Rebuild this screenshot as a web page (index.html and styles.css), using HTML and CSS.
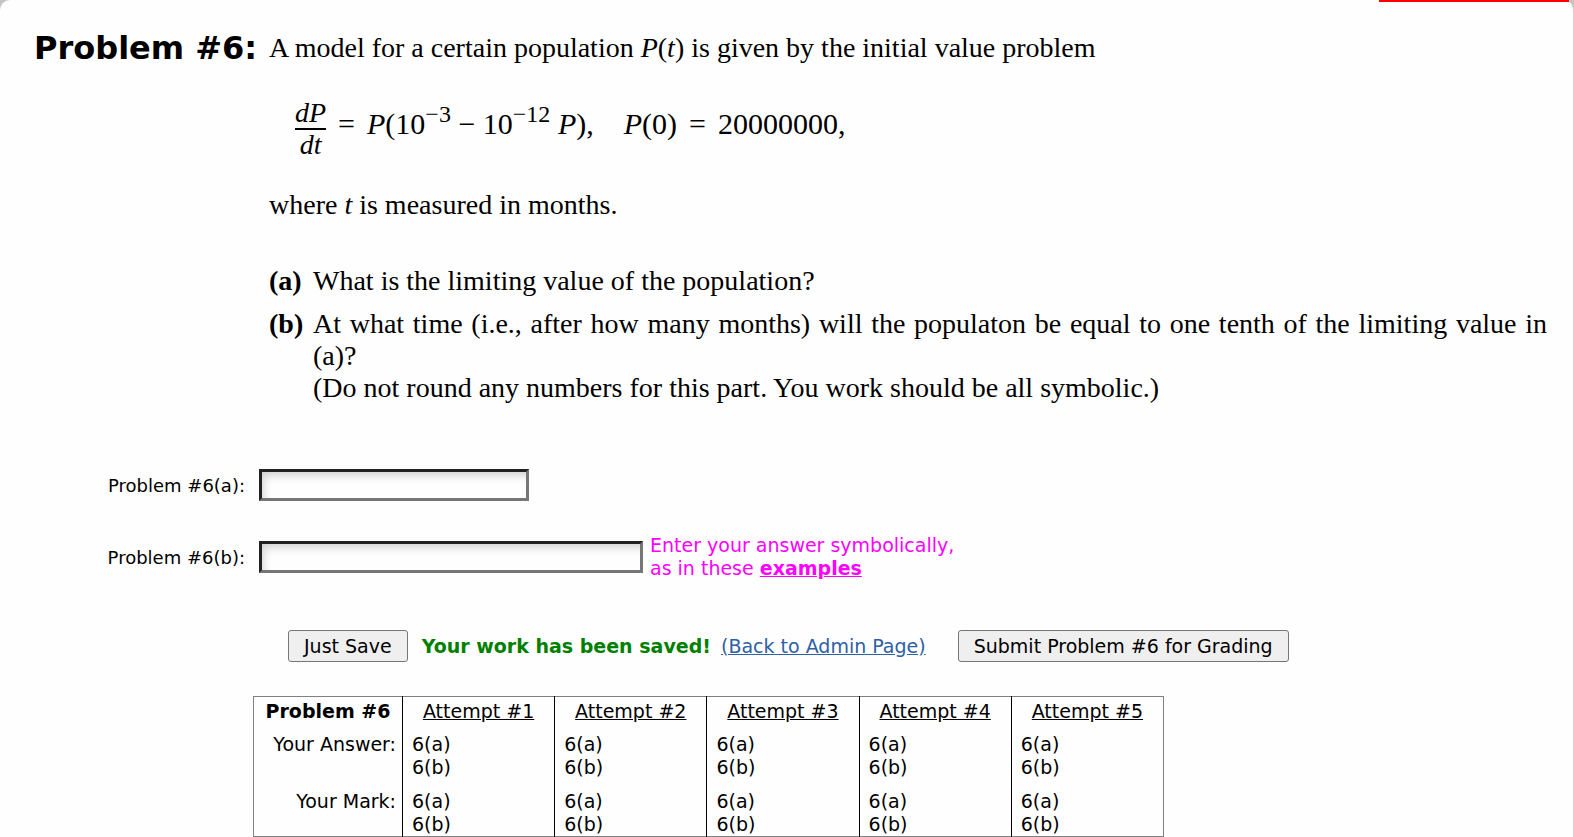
FILE: index.html
```html
<!DOCTYPE html>
<html lang="en">
<head>
    <meta charset="UTF-8">
    <meta name="viewport" content="width=device-width, initial-scale=1.0">
    <title>Problem #6</title>
    <link rel="stylesheet" href="styles.css">
</head>
<body>
    <main class="page">
        <div class="marker"></div>

        <!-- Problem statement -->
        <section class="problem">
            <h1 class="problem-title">Problem #6:</h1>
            <div class="problem-body">
                <p class="intro">A model for a certain population <i>P</i>(<i>t</i>) is given by the initial value problem</p>

                <div class="equation">
                    <span class="fraction"><i class="numerator">dP</i><i>dt</i></span>
                    <span class="term">=</span>
                    <span class="term"><i>P</i>(10<sup>−3</sup> − 10<sup>−12</sup> <i>P</i>),</span>
                    <span class="term condition"><i>P</i>(0)</span>
                    <span class="term">=</span>
                    <span class="term">20000000,</span>
                </div>

                <p class="where">where <i>t</i> is measured in months.</p>

                <div class="part">
                    <b>(a)</b>
                    <p>What is the limiting value of the population?</p>
                </div>
                <div class="part">
                    <b>(b)</b>
                    <p>At what time (i.e., after how many months) will the populaton be equal to one tenth of the limiting value in (a)?<br>(Do not round any numbers for this part. You work should be all symbolic.)</p>
                </div>
            </div>
        </section>

        <!-- Answer form -->
        <form class="answers" id="answerForm">
            <div class="answer-row">
                <label for="answerA">Problem #6(a):</label>
                <input type="text" id="answerA" name="answerA" class="answer-a">
            </div>
            <div class="answer-row">
                <label for="answerB">Problem #6(b):</label>
                <input type="text" id="answerB" name="answerB" class="answer-b">
                <p class="hint">Enter your answer symbolically,<br>as in these <a href="#examples">examples</a></p>
            </div>
            <div class="actions">
                <button type="button">Just Save</button>
                <p class="saved"><b>Your work has been saved!</b> <a href="#admin">(Back to Admin Page)</a></p>
                <button type="submit">Submit Problem #6 for Grading</button>
            </div>
        </form>

        <!-- Attempts -->
        <table class="attempts">
            <thead>
                <tr>
                    <th class="first">Problem #6</th>
                    <th>Attempt #1</th>
                    <th>Attempt #2</th>
                    <th>Attempt #3</th>
                    <th>Attempt #4</th>
                    <th>Attempt #5</th>
                </tr>
            </thead>
            <tbody>
                <tr>
                    <td class="row-label">Your Answer:</td>
                    <td>6(a)<br>6(b)</td>
                    <td>6(a)<br>6(b)</td>
                    <td>6(a)<br>6(b)</td>
                    <td>6(a)<br>6(b)</td>
                    <td>6(a)<br>6(b)</td>
                </tr>
                <tr>
                    <td class="row-label">Your Mark:</td>
                    <td>6(a)<br>6(b)</td>
                    <td>6(a)<br>6(b)</td>
                    <td>6(a)<br>6(b)</td>
                    <td>6(a)<br>6(b)</td>
                    <td>6(a)<br>6(b)</td>
                </tr>
            </tbody>
        </table>
    </main>
</body>
</html>
```
FILE: styles.css
```css
* {
    box-sizing: border-box;
}

body {
    margin: 0;
    background: #c4c4c4;
    color: #000;
    font-family: Verdana, "DejaVu Sans", sans-serif;
    font-size: 19px;
    line-height: 23px;
}

p, h1 {
    margin: 0;
}

.page {
    background: #fefefe;
    border-right: 1px solid #d0d0d0;
    border-radius: 10px 10px 0 0;
}

.marker {
    width: 190px;
    height: 2px;
    margin: 0 4px 0 auto;
    background: #f00;
}

/* Problem statement */
.problem {
    display: flex;
    gap: 10px;
    padding: 30px 26px 0 34px;
}

.problem-title {
    flex: 0 0 225px;
    font-size: 32px;
    line-height: 32px;
    white-space: nowrap;
}

.problem-body {
    flex: 1;
    font-family: "Times New Roman", "Liberation Serif", serif;
    font-size: 28px;
    line-height: 32px;
}

.equation {
    display: flex;
    align-items: center;
    gap: 12px;
    padding: 34px 0 0 26px;
}

.term {
    padding-bottom: 10px;
    font-size: 30px;
}

.term sup {
    font-size: 24px;
    line-height: 0;
    vertical-align: 12px;
}

.fraction {
    display: flex;
    flex-direction: column;
    line-height: 30px;
    text-align: center;
}

.numerator {
    border-bottom: 2px solid #000;
}

.condition {
    margin-left: 18px;
}

.where {
    margin: 29px 0 44px;
}

.part {
    display: flex;
    margin-bottom: 11px;
}

.part b {
    flex: 0 0 44px;
}

.part p {
    flex: 1;
    text-align: justify;
}

/* Answer form */
.answers {
    padding-top: 46px;
}

.answer-row {
    display: flex;
    align-items: center;
    min-height: 48px;
    margin-bottom: 24px;
}

.answer-row label {
    width: 259px;
    padding-right: 14px;
    font-size: 18px;
    text-align: right;
}

.answer-row input {
    height: 32px;
    border: 3px inset #767676;
    background: #fefefe;
    box-shadow: inset 5px 7px 10px -4px #ccc;
    font: inherit;
}

.answer-a {
    width: 270px;
}

.answer-b {
    width: 384px;
}

.hint, .hint a {
    color: #f0f;
}

.hint {
    padding-left: 7px;
}

.hint a {
    font-weight: bold;
}

.actions {
    display: flex;
    align-items: center;
    gap: 14px;
    padding: 25px 0 34px 288px;
}

.actions button {
    height: 32px;
    padding: 0 15px;
    border: 1px solid #767676;
    border-radius: 3px;
    background: #efefef;
    color: #000;
    font: inherit;
}

.saved {
    margin-right: 18px;
}

.saved b {
    margin-right: 4px;
    color: #008000;
}

.saved a {
    color: #2f5fa5;
}

/* Attempts */
.attempts {
    width: 911px;
    margin-left: 253px;
    border: 1px solid #808080;
    border-collapse: collapse;
    table-layout: fixed;
}

.attempts th, .attempts td {
    padding: 3px 9px;
    border-left: 1px solid #000;
    vertical-align: top;
    text-align: left;
}

.attempts th {
    font-weight: normal;
    text-align: center;
    text-decoration: underline;
}

.attempts td {
    padding: 7px 9px 4px;
}

.attempts tr:last-child td {
    padding-bottom: 0;
}

.attempts .first {
    width: 149px;
    border-left-color: #808080;
    font-weight: bold;
    text-decoration: none;
}

.attempts .row-label {
    padding-right: 6px;
    padding-left: 0;
    border-left-color: #808080;
    text-align: right;
}
```
